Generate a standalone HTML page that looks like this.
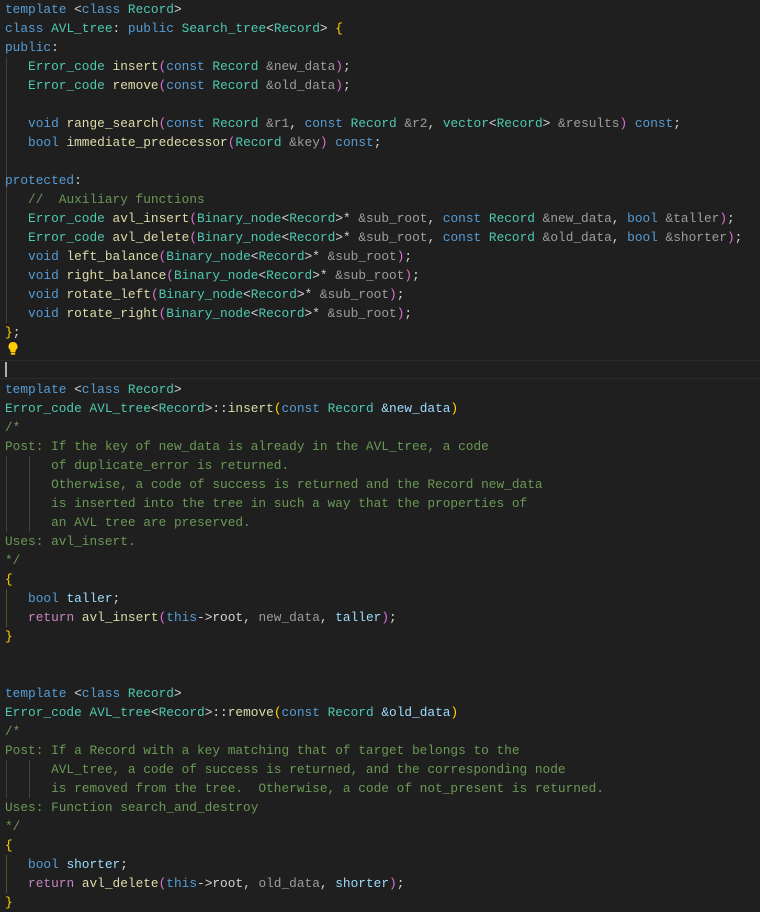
<!DOCTYPE html>
<html><head><meta charset="utf-8">
<style>
html,body{margin:0;padding:0;background:#1f1f1f;}
body{width:760px;height:911px;overflow:hidden;position:relative;font-family:"Liberation Mono",monospace;font-size:12.8px;color:#d4d4d4;}
.l{position:absolute;left:5px;height:19px;line-height:19px;white-space:pre;}
.k{color:#569cd6}.t{color:#4ec9b0}.f{color:#dcdcaa}.v{color:#9cdcfe}.p{color:#9d9d9d}.c{color:#6a9955}.r{color:#c586c0}
.g{color:#ffd700}.m{color:#da70d6}.b{color:#179fff}.o{color:#d4d4d4}
.gd{position:absolute;width:1px;background:#404040;}
</style></head><body>
<div style="position:absolute;left:0;top:360px;width:760px;height:19px;border-top:1px solid #2b2b2b;border-bottom:1px solid #2b2b2b;box-sizing:border-box"></div>
<div style="position:absolute;left:5px;top:362px;width:2px;height:15px;background:#aeafad"></div>
<!-- guides -->
<div class="gd" style="left:6px;top:57px;height:266px"></div>
<div class="gd" style="left:6px;top:456px;height:76px"></div>
<div class="gd" style="left:29px;top:456px;height:76px"></div>
<div class="gd" style="left:6px;top:589px;height:38px;background:#5a5028"></div>
<div class="gd" style="left:6px;top:760px;height:38px"></div>
<div class="gd" style="left:29px;top:760px;height:38px"></div>
<div class="gd" style="left:6px;top:855px;height:38px;background:#5a5028"></div>
<svg style="position:absolute;left:7px;top:341px" width="12" height="15" viewBox="0 0 12 15"><path d="M6 1a4.5 4.5 0 0 0-2.6 8.2V11h5.2V9.2A4.5 4.5 0 0 0 6 1z" fill="#ffcc00"/><rect x="3.8" y="11.5" width="4.4" height="2.2" fill="#ffcc00"/></svg>

<div class="l" style="top:0"><span class="k">template</span> &lt;<span class="k">class</span> <span class="t">Record</span>&gt;</div>
<div class="l" style="top:19px"><span class="k">class</span> <span class="t">AVL_tree</span>: <span class="k">public</span> <span class="t">Search_tree</span>&lt;<span class="t">Record</span>&gt; <span class="g">{</span></div>
<div class="l" style="top:38px"><span class="k">public</span>:</div>
<div class="l" style="top:57px">   <span class="t">Error_code</span> <span class="f">insert</span><span class="m">(</span><span class="k">const</span> <span class="t">Record</span> <span class="p">&amp;new_data</span><span class="m">)</span>;</div>
<div class="l" style="top:76px">   <span class="t">Error_code</span> <span class="f">remove</span><span class="m">(</span><span class="k">const</span> <span class="t">Record</span> <span class="p">&amp;old_data</span><span class="m">)</span>;</div>
<div class="l" style="top:114px">   <span class="k">void</span> <span class="f">range_search</span><span class="m">(</span><span class="k">const</span> <span class="t">Record</span> <span class="p">&amp;r1</span>, <span class="k">const</span> <span class="t">Record</span> <span class="p">&amp;r2</span>, <span class="t">vector</span>&lt;<span class="t">Record</span>&gt; <span class="p">&amp;results</span><span class="m">)</span> <span class="k">const</span>;</div>
<div class="l" style="top:133px">   <span class="k">bool</span> <span class="f">immediate_predecessor</span><span class="m">(</span><span class="t">Record</span> <span class="p">&amp;key</span><span class="m">)</span> <span class="k">const</span>;</div>
<div class="l" style="top:171px"><span class="k">protected</span>:</div>
<div class="l" style="top:190px">   <span class="c">//  Auxiliary functions</span></div>
<div class="l" style="top:209px">   <span class="t">Error_code</span> <span class="f">avl_insert</span><span class="m">(</span><span class="t">Binary_node</span>&lt;<span class="t">Record</span>&gt;* <span class="p">&amp;sub_root</span>, <span class="k">const</span> <span class="t">Record</span> <span class="p">&amp;new_data</span>, <span class="k">bool</span> <span class="p">&amp;taller</span><span class="m">)</span>;</div>
<div class="l" style="top:228px">   <span class="t">Error_code</span> <span class="f">avl_delete</span><span class="m">(</span><span class="t">Binary_node</span>&lt;<span class="t">Record</span>&gt;* <span class="p">&amp;sub_root</span>, <span class="k">const</span> <span class="t">Record</span> <span class="p">&amp;old_data</span>, <span class="k">bool</span> <span class="p">&amp;shorter</span><span class="m">)</span>;</div>
<div class="l" style="top:247px">   <span class="k">void</span> <span class="f">left_balance</span><span class="m">(</span><span class="t">Binary_node</span>&lt;<span class="t">Record</span>&gt;* <span class="p">&amp;sub_root</span><span class="m">)</span>;</div>
<div class="l" style="top:266px">   <span class="k">void</span> <span class="f">right_balance</span><span class="m">(</span><span class="t">Binary_node</span>&lt;<span class="t">Record</span>&gt;* <span class="p">&amp;sub_root</span><span class="m">)</span>;</div>
<div class="l" style="top:285px">   <span class="k">void</span> <span class="f">rotate_left</span><span class="m">(</span><span class="t">Binary_node</span>&lt;<span class="t">Record</span>&gt;* <span class="p">&amp;sub_root</span><span class="m">)</span>;</div>
<div class="l" style="top:304px">   <span class="k">void</span> <span class="f">rotate_right</span><span class="m">(</span><span class="t">Binary_node</span>&lt;<span class="t">Record</span>&gt;* <span class="p">&amp;sub_root</span><span class="m">)</span>;</div>
<div class="l" style="top:323px"><span class="g">}</span>;</div>

<div class="l" style="top:380px"><span class="k">template</span> &lt;<span class="k">class</span> <span class="t">Record</span>&gt;</div>
<div class="l" style="top:399px"><span class="t">Error_code</span> <span class="t">AVL_tree</span>&lt;<span class="t">Record</span>&gt;::<span class="f">insert</span><span class="g">(</span><span class="k">const</span> <span class="t">Record</span> <span class="v">&amp;new_data</span><span class="g">)</span></div>
<div class="l c" style="top:418px">/*</div>
<div class="l c" style="top:437px">Post: If the key of new_data is already in the AVL_tree, a code</div>
<div class="l c" style="top:456px">      of duplicate_error is returned.</div>
<div class="l c" style="top:475px">      Otherwise, a code of success is returned and the Record new_data</div>
<div class="l c" style="top:494px">      is inserted into the tree in such a way that the properties of</div>
<div class="l c" style="top:513px">      an AVL tree are preserved.</div>
<div class="l c" style="top:532px">Uses: avl_insert.</div>
<div class="l c" style="top:551px">*/</div>
<div class="l" style="top:570px"><span class="g">{</span></div>
<div class="l" style="top:589px">   <span class="k">bool</span> <span class="v">taller</span>;</div>
<div class="l" style="top:608px">   <span class="r">return</span> <span class="f">avl_insert</span><span class="m">(</span><span class="k">this</span>-&gt;<span class="o">root</span>, <span class="p">new_data</span>, <span class="v">taller</span><span class="m">)</span>;</div>
<div class="l" style="top:627px"><span class="g">}</span></div>

<div class="l" style="top:684px"><span class="k">template</span> &lt;<span class="k">class</span> <span class="t">Record</span>&gt;</div>
<div class="l" style="top:703px"><span class="t">Error_code</span> <span class="t">AVL_tree</span>&lt;<span class="t">Record</span>&gt;::<span class="f">remove</span><span class="g">(</span><span class="k">const</span> <span class="t">Record</span> <span class="v">&amp;old_data</span><span class="g">)</span></div>
<div class="l c" style="top:722px">/*</div>
<div class="l c" style="top:741px">Post: If a Record with a key matching that of target belongs to the</div>
<div class="l c" style="top:760px">      AVL_tree, a code of success is returned, and the corresponding node</div>
<div class="l c" style="top:779px">      is removed from the tree.  Otherwise, a code of not_present is returned.</div>
<div class="l c" style="top:798px">Uses: Function search_and_destroy</div>
<div class="l c" style="top:817px">*/</div>
<div class="l" style="top:836px"><span class="g">{</span></div>
<div class="l" style="top:855px">   <span class="k">bool</span> <span class="v">shorter</span>;</div>
<div class="l" style="top:874px">   <span class="r">return</span> <span class="f">avl_delete</span><span class="m">(</span><span class="k">this</span>-&gt;<span class="o">root</span>, <span class="p">old_data</span>, <span class="v">shorter</span><span class="m">)</span>;</div>
<div class="l" style="top:893px"><span class="g">}</span></div>
</body></html>
